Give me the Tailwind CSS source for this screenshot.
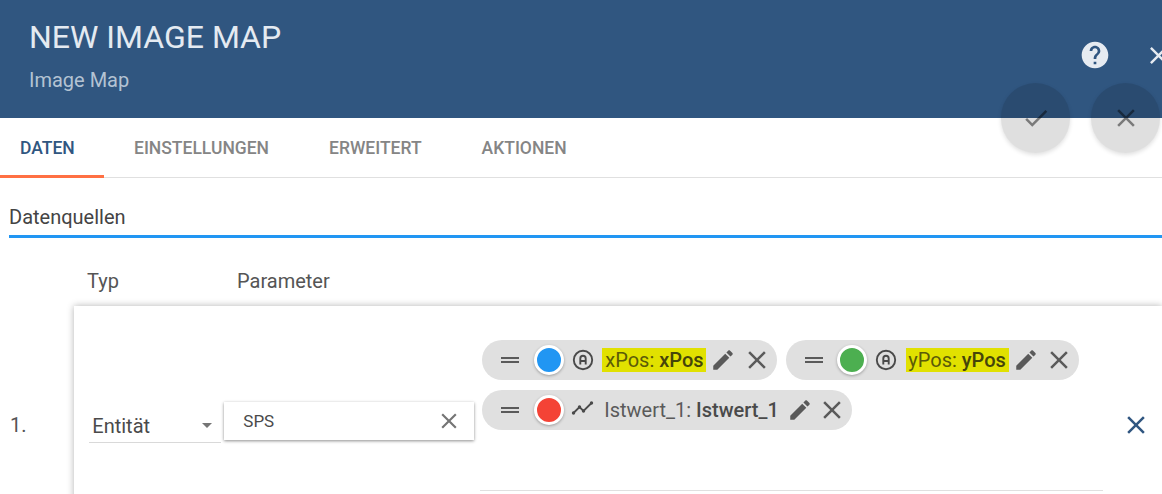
<!DOCTYPE html>
<html lang="en">
  <head>
    <meta charset="UTF-8" />
    <title>New Image Map</title>
    <script src="https://cdn.jsdelivr.net/npm/@tailwindcss/browser@4"></script>
  </head>
  <body>
    <div class="relative w-[1162px] h-[494px] overflow-hidden bg-white font-['Roboto',sans-serif]">
      <!-- header -->
      <div class="h-[118px] bg-[#305680] pl-[29px] pt-[18px]">
        <div class="text-[32px] leading-[38px] text-[#e4eaf1]">NEW IMAGE MAP</div>
        <div class="mt-[12px] text-[20px] leading-[24px] text-[#b4c3d3]">Image Map</div>
      </div>

      <!-- header icons -->
      <svg class="absolute left-[1079px] top-[39px] w-[32px] h-[32px]" viewBox="0 0 24 24" fill="#e6ebf1"><path d="M12 2C6.48 2 2 6.48 2 12s4.48 10 10 10 10-4.48 10-10S17.52 2 12 2zm1 17h-2v-2h2v2zm2.07-7.75l-.9.92C13.45 12.9 13 13.5 13 15h-2v-.5c0-1.1.45-2.1 1.17-2.83l1.24-1.26c.37-.36.59-.86.59-1.41 0-1.1-.9-2-2-2s-2 .9-2 2H8c0-2.21 1.79-4 4-4s4 1.79 4 4c0 .88-.36 1.68-.93 2.25z"/></svg>
      <svg class="absolute left-[1144px] top-[41px] w-[29px] h-[29px]" viewBox="0 0 24 24" fill="#e6ebf1"><path d="M19 6.41L17.59 5 12 10.59 6.41 5 5 6.41 10.59 12 5 17.59 6.41 19 12 13.41 17.59 19 19 17.59 13.41 12z"/></svg>

      <!-- round buttons over the header edge -->
      <div class="absolute left-[1001px] top-[83px] w-[69px] h-[70px] rounded-full bg-black/[0.125] shadow-[0_2px_4px_rgba(0,0,0,0.12)] flex items-center justify-center">
        <svg class="w-[30px] h-[30px]" viewBox="0 0 24 24" fill="black" fill-opacity="0.45"><path d="M9 16.17L4.83 12l-1.42 1.41L9 19 21 7l-1.41-1.41z"/></svg>
      </div>
      <div class="absolute left-[1091px] top-[83px] w-[69px] h-[70px] rounded-full bg-black/[0.125] shadow-[0_2px_4px_rgba(0,0,0,0.12)] flex items-center justify-center">
        <svg class="w-[30px] h-[30px]" viewBox="0 0 24 24" fill="black" fill-opacity="0.45"><path d="M19 6.41L17.59 5 12 10.59 6.41 5 5 6.41 10.59 12 5 17.59 6.41 19 12 13.41 17.59 19 19 17.59 13.41 12z"/></svg>
      </div>

      <!-- tabs -->
      <div class="flex h-[60px] border-b border-[#e0e0e0] text-[17.5px] font-medium text-[#858585]">
        <div class="w-[104px] h-[60px] pt-[19px] pl-[20px] leading-[22px] border-b-[3px] border-[#ff7043] text-[#305680]">DATEN</div>
        <div class="ml-[30px] pt-[19px] leading-[22px]">EINSTELLUNGEN</div>
        <div class="ml-[60px] pt-[19px] leading-[22px]">ERWEITERT</div>
        <div class="ml-[60px] pt-[19px] leading-[22px]">AKTIONEN</div>
      </div>

      <!-- section title -->
      <div class="ml-[9px] mt-[27px] h-[33px] border-b-[3px] border-[#2196f3] text-[20px] leading-[24px] text-[#444]">Datenquellen</div>

      <!-- column labels -->
      <div class="flex mt-[31px] text-[20px] leading-[24px] text-[#555]">
        <div class="ml-[87px] w-[150px]">Typ</div>
        <div>Parameter</div>
      </div>

      <!-- row -->
      <div class="flex mt-[13px]">
        <div class="w-[75px] pl-[10px] pt-[107px] text-[20px] leading-[24px] text-[#555]">1.</div>
        <div class="flex w-[1100px] h-[200px] shadow-[0_0_7px_rgba(0,0,0,0.3)] bg-white">
          <!-- type select -->
          <div class="ml-[15px] mt-[107px] w-[132px] h-[30px] border-b border-[#d9d9d9] flex items-start justify-between pl-[3px] pr-[9px] text-[20px] leading-[26px] text-[#4a4a4a]">
            <span>Entität</span>
            <span class="mt-[10px] w-0 h-0 border-x-[5px] border-x-transparent border-t-[5px] border-t-[#757575]"></span>
          </div>
          <!-- entity autocomplete -->
          <div class="ml-[3px] mt-[96px] w-[250px] h-[38px] bg-white shadow-[0_1px_3px_rgba(0,0,0,0.45)] flex items-center justify-between pl-[19px] pr-[12px] text-[17px] text-[#4a4a4a]">
            <span class="pt-[1px]">SPS</span>
            <svg class="w-[26px] h-[26px]" viewBox="0 0 24 24" fill="#757575"><path d="M19 6.41L17.59 5 12 10.59 6.41 5 5 6.41 10.59 12 5 17.59 6.41 19 12 13.41 17.59 19 19 17.59 13.41 12z"/></svg>
          </div>
          <!-- keys -->
          <div class="ml-[6px] w-[623px] h-[185px] border-b border-[#e0e0e0] pt-[34px] pl-[2px]">
            <div class="flex gap-[9px]">
              <div class="flex items-center w-[295px] h-[40px] shrink-0 rounded-full bg-[#e0e0e0] text-[20px] text-[#5a5a5a]">
                <svg class="ml-[16px] w-[24px] h-[24px]" viewBox="0 0 24 24" fill="#5a5a5a"><path d="M3 9h18v2H3zM3 13h18v2H3z"/></svg>
                <span class="ml-[12px] w-[30px] h-[30px] rounded-full border-[3px] border-white bg-[#2196f3] shadow-[0_1px_3px_rgba(0,0,0,0.3)]"></span>
                <svg class="ml-[8px] w-[22px] h-[22px]" viewBox="0 0 22 22" fill="none" stroke="#4a4a4a"><circle cx="11" cy="11" r="9.2" stroke-width="1.9"/><path d="M8.3 15.5V9.5a2.7 2.7 0 0 1 5.4 0v6M8.3 12h5.4" stroke-width="1.9"/></svg>
                <span class="ml-[8px] pl-[3px] w-[104px] bg-[#e1e100] leading-[24px] whitespace-nowrap text-[#5b5b08]">xPos: <b class="font-medium text-[#45450a]">xPos</b></span>
                <svg class="ml-[4px] w-[26px] h-[26px]" viewBox="0 0 24 24" fill="#5a5a5a"><path d="M3 17.25V21h3.75L17.81 9.94l-3.75-3.75L3 17.25zM20.71 7.04c.39-.39.39-1.02 0-1.41l-2.34-2.34c-.39-.39-1.02-.39-1.41 0l-1.83 1.83 3.75 3.75 1.83-1.83z"/></svg>
                <svg class="ml-[6px] w-[30px] h-[30px]" viewBox="0 0 24 24" fill="#5a5a5a"><path d="M19 6.41L17.59 5 12 10.59 6.41 5 5 6.41 10.59 12 5 17.59 6.41 19 12 13.41 17.59 19 19 17.59 13.41 12z"/></svg>
              </div>
              <div class="flex items-center w-[293px] h-[40px] shrink-0 rounded-full bg-[#e0e0e0] text-[20px] text-[#5a5a5a]">
                <svg class="ml-[16px] w-[24px] h-[24px]" viewBox="0 0 24 24" fill="#5a5a5a"><path d="M3 9h18v2H3zM3 13h18v2H3z"/></svg>
                <span class="ml-[11px] w-[30px] h-[30px] rounded-full border-[3px] border-white bg-[#4caf50] shadow-[0_1px_3px_rgba(0,0,0,0.3)]"></span>
                <svg class="ml-[8px] w-[22px] h-[22px]" viewBox="0 0 22 22" fill="none" stroke="#4a4a4a"><circle cx="11" cy="11" r="9.2" stroke-width="1.9"/><path d="M8.3 15.5V9.5a2.7 2.7 0 0 1 5.4 0v6M8.3 12h5.4" stroke-width="1.9"/></svg>
                <span class="ml-[9px] pl-[2px] w-[103px] bg-[#e1e100] leading-[24px] whitespace-nowrap text-[#5b5b08]">yPos: <b class="font-medium text-[#45450a]">yPos</b></span>
                <svg class="ml-[4px] w-[26px] h-[26px]" viewBox="0 0 24 24" fill="#5a5a5a"><path d="M3 17.25V21h3.75L17.81 9.94l-3.75-3.75L3 17.25zM20.71 7.04c.39-.39.39-1.02 0-1.41l-2.34-2.34c-.39-.39-1.02-.39-1.41 0l-1.83 1.83 3.75 3.75 1.83-1.83z"/></svg>
                <svg class="ml-[5px] w-[30px] h-[30px]" viewBox="0 0 24 24" fill="#5a5a5a"><path d="M19 6.41L17.59 5 12 10.59 6.41 5 5 6.41 10.59 12 5 17.59 6.41 19 12 13.41 17.59 19 19 17.59 13.41 12z"/></svg>
              </div>
            </div>
            <div class="mt-[10px] flex items-center w-[370px] h-[40px] rounded-full bg-[#e0e0e0] text-[20px] text-[#5a5a5a]">
              <svg class="ml-[16px] w-[24px] h-[24px]" viewBox="0 0 24 24" fill="#5a5a5a"><path d="M3 9h18v2H3zM3 13h18v2H3z"/></svg>
              <span class="ml-[12px] w-[30px] h-[30px] rounded-full border-[3px] border-white bg-[#f44336] shadow-[0_1px_3px_rgba(0,0,0,0.3)]"></span>
              <svg class="ml-[7px] -mt-[2px] w-[24px] h-[24px]" viewBox="0 0 24 24" fill="none" stroke="#4a4a4a" stroke-width="1.8"><path d="M2.5 16l6-6 4 4 8-8"/><g fill="#4a4a4a" stroke="none"><circle cx="2.5" cy="16" r="1.7"/><circle cx="8.5" cy="10" r="1.7"/><circle cx="12.5" cy="14" r="1.7"/><circle cx="20.5" cy="6" r="1.7"/></g></svg>
              <span class="ml-[9px] leading-[24px] whitespace-nowrap">Istwert_1: <b class="font-medium text-[#4a4a4a]">Istwert_1</b></span>
              <svg class="ml-[8px] w-[26px] h-[26px]" viewBox="0 0 24 24" fill="#5a5a5a"><path d="M3 17.25V21h3.75L17.81 9.94l-3.75-3.75L3 17.25zM20.71 7.04c.39-.39.39-1.02 0-1.41l-2.34-2.34c-.39-.39-1.02-.39-1.41 0l-1.83 1.83 3.75 3.75 1.83-1.83z"/></svg>
              <svg class="ml-[4px] w-[30px] h-[30px]" viewBox="0 0 24 24" fill="#5a5a5a"><path d="M19 6.41L17.59 5 12 10.59 6.41 5 5 6.41 10.59 12 5 17.59 6.41 19 12 13.41 17.59 19 19 17.59 13.41 12z"/></svg>
            </div>
          </div>
          <!-- remove row -->
          <svg class="ml-[18px] mt-[104px] w-[30px] h-[30px]" viewBox="0 0 24 24" fill="#305680"><path d="M19 6.41L17.59 5 12 10.59 6.41 5 5 6.41 10.59 12 5 17.59 6.41 19 12 13.41 17.59 19 19 17.59 13.41 12z"/></svg>
        </div>
      </div>
    </div>
  </body>
</html>
